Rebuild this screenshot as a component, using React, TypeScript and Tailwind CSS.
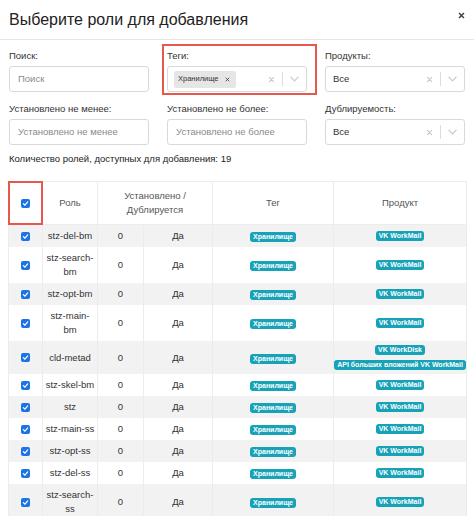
import React from "react";

type Row = {
  role: string;
  count: number;
  dup: string;
  tag: string;
  products: string[];
};

const rows: Row[] = [
  { role: "stz-del-bm", count: 0, dup: "Да", tag: "Хранилище", products: ["VK WorkMail"] },
  { role: "stz-search-bm", count: 0, dup: "Да", tag: "Хранилище", products: ["VK WorkMail"] },
  { role: "stz-opt-bm", count: 0, dup: "Да", tag: "Хранилище", products: ["VK WorkMail"] },
  { role: "stz-main-bm", count: 0, dup: "Да", tag: "Хранилище", products: ["VK WorkMail"] },
  { role: "cld-metad", count: 0, dup: "Да", tag: "Хранилище", products: ["VK WorkDisk", "API больших вложений VK WorkMail"] },
  { role: "stz-skel-bm", count: 0, dup: "Да", tag: "Хранилище", products: ["VK WorkMail"] },
  { role: "stz", count: 0, dup: "Да", tag: "Хранилище", products: ["VK WorkMail"] },
  { role: "stz-main-ss", count: 0, dup: "Да", tag: "Хранилище", products: ["VK WorkMail"] },
  { role: "stz-opt-ss", count: 0, dup: "Да", tag: "Хранилище", products: ["VK WorkMail"] },
  { role: "stz-del-ss", count: 0, dup: "Да", tag: "Хранилище", products: ["VK WorkMail"] },
  { role: "stz-search-ss", count: 0, dup: "Да", tag: "Хранилище", products: ["VK WorkMail"] },
];

function Check() {
  return (
    <span className="inline-flex h-[9px] w-[9px] items-center justify-center rounded-[2px] bg-[#1a73e8] align-middle">
      <svg width="7" height="7" viewBox="0 0 10 10" fill="none">
        <path d="M2 5.2 L4.2 7.4 L8.2 2.8" stroke="white" strokeWidth="1.8" strokeLinecap="round" strokeLinejoin="round" />
      </svg>
    </span>
  );
}

function Badge({ children }: { children: React.ReactNode }) {
  return (
    <span className="inline-block whitespace-nowrap rounded-[3px] bg-[#17a2b8] px-[3px] text-[7px] font-bold leading-[10px] text-white">
      {children}
    </span>
  );
}

function Cross({ className }: { className?: string }) {
  return (
    <svg className={className} width="7" height="7" viewBox="0 0 10 10">
      <path d="M2 2 L8 8 M8 2 L2 8" stroke="currentColor" strokeWidth="1.6" strokeLinecap="round" />
    </svg>
  );
}

function SelectControls() {
  return (
    <div className="flex items-center self-stretch">
      <Cross className="mr-[7px] text-[#c8c8c8]" />
      <span className="my-[5px] w-px self-stretch bg-[#dcdcdc]" />
      <svg className="mx-[7px] text-[#c8c8c8]" width="9" height="6" viewBox="0 0 10 6">
        <path d="M1 1 L5 5 L9 1" stroke="currentColor" strokeWidth="1.3" fill="none" strokeLinecap="round" />
      </svg>
    </div>
  );
}

function TextInput({ placeholder }: { placeholder: string }) {
  return (
    <div className="flex h-[26px] items-center rounded-[3px] border border-[#d9d9d9] bg-white pl-[8px] text-[9.5px] text-[#8a8a8a]">
      {placeholder}
    </div>
  );
}

function Field({ label, children }: { label: string; children: React.ReactNode }) {
  return (
    <div className="flex flex-col">
      <div className="mb-[4px] text-[9.5px] leading-[12px] text-[#333]">{label}</div>
      {children}
    </div>
  );
}

export default function App() {
  return (
    <div className="h-[516px] w-[474px] overflow-hidden bg-white font-['Liberation_Sans',Arial,sans-serif] text-[#333]">
      <div className="flex items-center justify-between border-b border-[#e6e6e6] pl-[9px] pr-[9px] pt-[9px] pb-[9px]">
        <h1 className="text-[16px] leading-[21px] text-[#222]">Выберите роли для добавления</h1>
        <svg className="mb-[8px] text-[#444]" width="7" height="7" viewBox="0 0 10 10">
          <path d="M1.5 1.5 L8.5 8.5 M8.5 1.5 L1.5 8.5" stroke="currentColor" strokeWidth="2.2" />
        </svg>
      </div>

      <div className="px-[9px] pt-[10px]">
        <div className="grid grid-cols-[140px_140px_140px] gap-x-[18px]">
          <Field label="Поиск:">
            <TextInput placeholder="Поиск" />
          </Field>
          <div className="relative">
            <div className="pointer-events-none absolute -left-[5px] -right-[10px] -top-[6px] -bottom-[3px] border-2 border-[#e8574b]" />
            <Field label="Теги:">
              <div className="flex h-[26px] w-[140px] items-center justify-between rounded-[3px] border border-[#d9d9d9] bg-white">
                <span className="ml-[6px] flex h-[17px] items-center gap-[6px] rounded-[2px] bg-[#e6e6e6] pl-[4px] pr-[6px] text-[7.5px] text-[#333]">
                  Хранилище
                  <Cross className="h-[5px] w-[5px] text-[#333]" />
                </span>
                <SelectControls />
              </div>
            </Field>
          </div>
          <Field label="Продукты:">
            <div className="flex h-[26px] items-center justify-between rounded-[3px] border border-[#d9d9d9] bg-white pl-[7px] text-[9.5px] text-[#333]">
              Все
              <SelectControls />
            </div>
          </Field>
        </div>

        <div className="mt-[11px] grid grid-cols-[140px_140px_140px] gap-x-[18px]">
          <Field label="Установлено не менее:">
            <TextInput placeholder="Установлено не менее" />
          </Field>
          <Field label="Установлено не более:">
            <TextInput placeholder="Установлено не более" />
          </Field>
          <Field label="Дублируемость:">
            <div className="flex h-[26px] items-center justify-between rounded-[3px] border border-[#d9d9d9] bg-white pl-[7px] text-[9.5px] text-[#333]">
              Все
              <SelectControls />
            </div>
          </Field>
        </div>

        <div className="mt-[8px] text-[9.5px] leading-[12px] text-[#222]">
          Количество ролей, доступных для добавления: 19
        </div>
      </div>

      <div className="mt-[16px] pl-[8px]">
        <table className="w-[458px] table-fixed border-collapse text-center text-[9.5px] leading-[14px]">
          <colgroup>
            <col className="w-[34px]" />
            <col className="w-[55px]" />
            <col className="w-[46px]" />
            <col className="w-[69px]" />
            <col className="w-[121px]" />
            <col className="w-[133px]" />
          </colgroup>
          <thead>
            <tr className="h-[43px] text-[#555]">
              <th className="relative border border-[#ececec] font-normal">
                <div className="pointer-events-none absolute -left-px -right-px -top-px -bottom-px border-2 border-[#e8574b]" />
                <Check />
              </th>
              <th className="border border-[#ececec] font-normal">Роль</th>
              <th colSpan={2} className="border border-[#ececec] py-[7px] font-normal">
                Установлено /
                <br />
                Дублируется
              </th>
              <th className="border border-[#ececec] font-normal">Тег</th>
              <th className="border border-[#ececec] font-normal">Продукт</th>
            </tr>
          </thead>
          <tbody>
            {rows.map((r, i) => (
              <tr key={r.role} className={i % 2 === 0 ? "bg-[#f2f2f2]" : "bg-white"}>
                <td className="border-x border-[#ececec] py-[4px]">
                  <Check />
                </td>
                <td className="border-x border-[#ececec] px-[2px] py-[4px] text-[#333]">{r.role}</td>
                <td className="border-x border-[#ececec] py-[4px] text-[#333]">{r.count}</td>
                <td className="border-x border-[#ececec] py-[4px] text-[#333]">{r.dup}</td>
                <td className="border-x border-[#ececec] py-[4px]">
                  <Badge>{r.tag}</Badge>
                </td>
                <td className="border-x border-[#ececec] py-[4px]">
                  <div className="flex flex-col items-center gap-[5px]">
                    {r.products.map((p) => (
                      <Badge key={p}>{p}</Badge>
                    ))}
                  </div>
                </td>
              </tr>
            ))}
          </tbody>
        </table>
      </div>
    </div>
  );
}
